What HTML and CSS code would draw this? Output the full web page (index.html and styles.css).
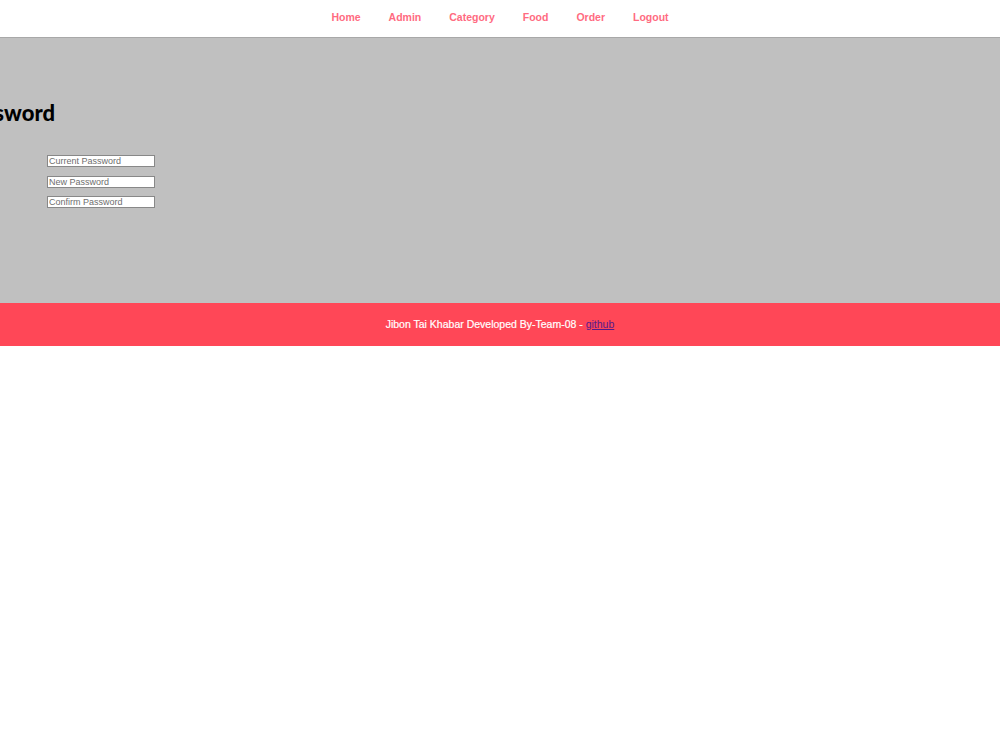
FILE: index.html
```html
<!DOCTYPE html>
<html>
<head>
<meta charset="utf-8">
<link rel="stylesheet" href="styles.css">
</head>
<body>
<header class="topbar">
  <nav class="nav">
    <a href="#">Home</a>
    <a href="#">Admin</a>
    <a href="#">Category</a>
    <a href="#">Food</a>
    <a href="#">Order</a>
    <a href="#">Logout</a>
  </nav>
</header>
<main class="content">
  <div class="title-wrap"><h2 class="title">Change Password</h2></div>
  <form class="form">
    <input type="password" placeholder="Current Password">
    <input type="password" placeholder="New Password">
    <input type="password" placeholder="Confirm Password">
  </form>
</main>
<footer class="footer">
  <p>Jibon Tai Khabar Developed By-Team-08 - <a href="#">github</a></p>
</footer>
</body>
</html>
```
FILE: styles.css
```css
html, body {
  margin: 0;
  padding: 0;
  background: #fff;
}
body {
  font-family: "Liberation Sans", Arial, sans-serif;
}
.topbar {
  height: 38px;
  background: #fff;
  border-bottom: 1px solid #a8a8a8;
  box-sizing: border-box;
  display: flex;
  justify-content: center;
  align-items: center;
}
.nav {
  display: flex;
  gap: 28px;
  padding-bottom: 4px;
}
.nav a {
  color: #ff6b81;
  font-weight: bold;
  font-size: 10.5px;
  text-decoration: none;
}
.content {
  background: #c0c0c0;
  height: 265px;
  box-sizing: border-box;
  padding-top: 61px;
}
.title-wrap {
  width: 55px;
  display: flex;
  justify-content: flex-end;
}
.title {
  margin: 0;
  white-space: nowrap;
  font-family: Lato, sans-serif;
  font-weight: 900;
  font-size: 22px;
  line-height: 28px;
  color: #000;
}
.form {
  display: flex;
  flex-direction: column;
  gap: 8.5px;
  margin: 28px 0 0 47px;
}
.form input {
  width: 108px;
  height: 12px;
  box-sizing: border-box;
  border: 1px solid #888;
  padding: 0 1px;
  margin: 0;
  background: #fff;
  font-family: "Liberation Sans", Arial, sans-serif;
  font-size: 9px;
  outline: none;
}
.form input::placeholder {
  color: #6e6e6e;
}
.footer {
  background: #ff4757;
  height: 43px;
  display: flex;
  align-items: center;
  justify-content: center;
}
.footer p {
  margin: 0 0 2px;
  color: #fff;
  font-size: 10.5px;
  -webkit-text-stroke: 0.2px #fff;
}
.footer a {
  color: #551a8b;
  -webkit-text-stroke: 0;
}
```
